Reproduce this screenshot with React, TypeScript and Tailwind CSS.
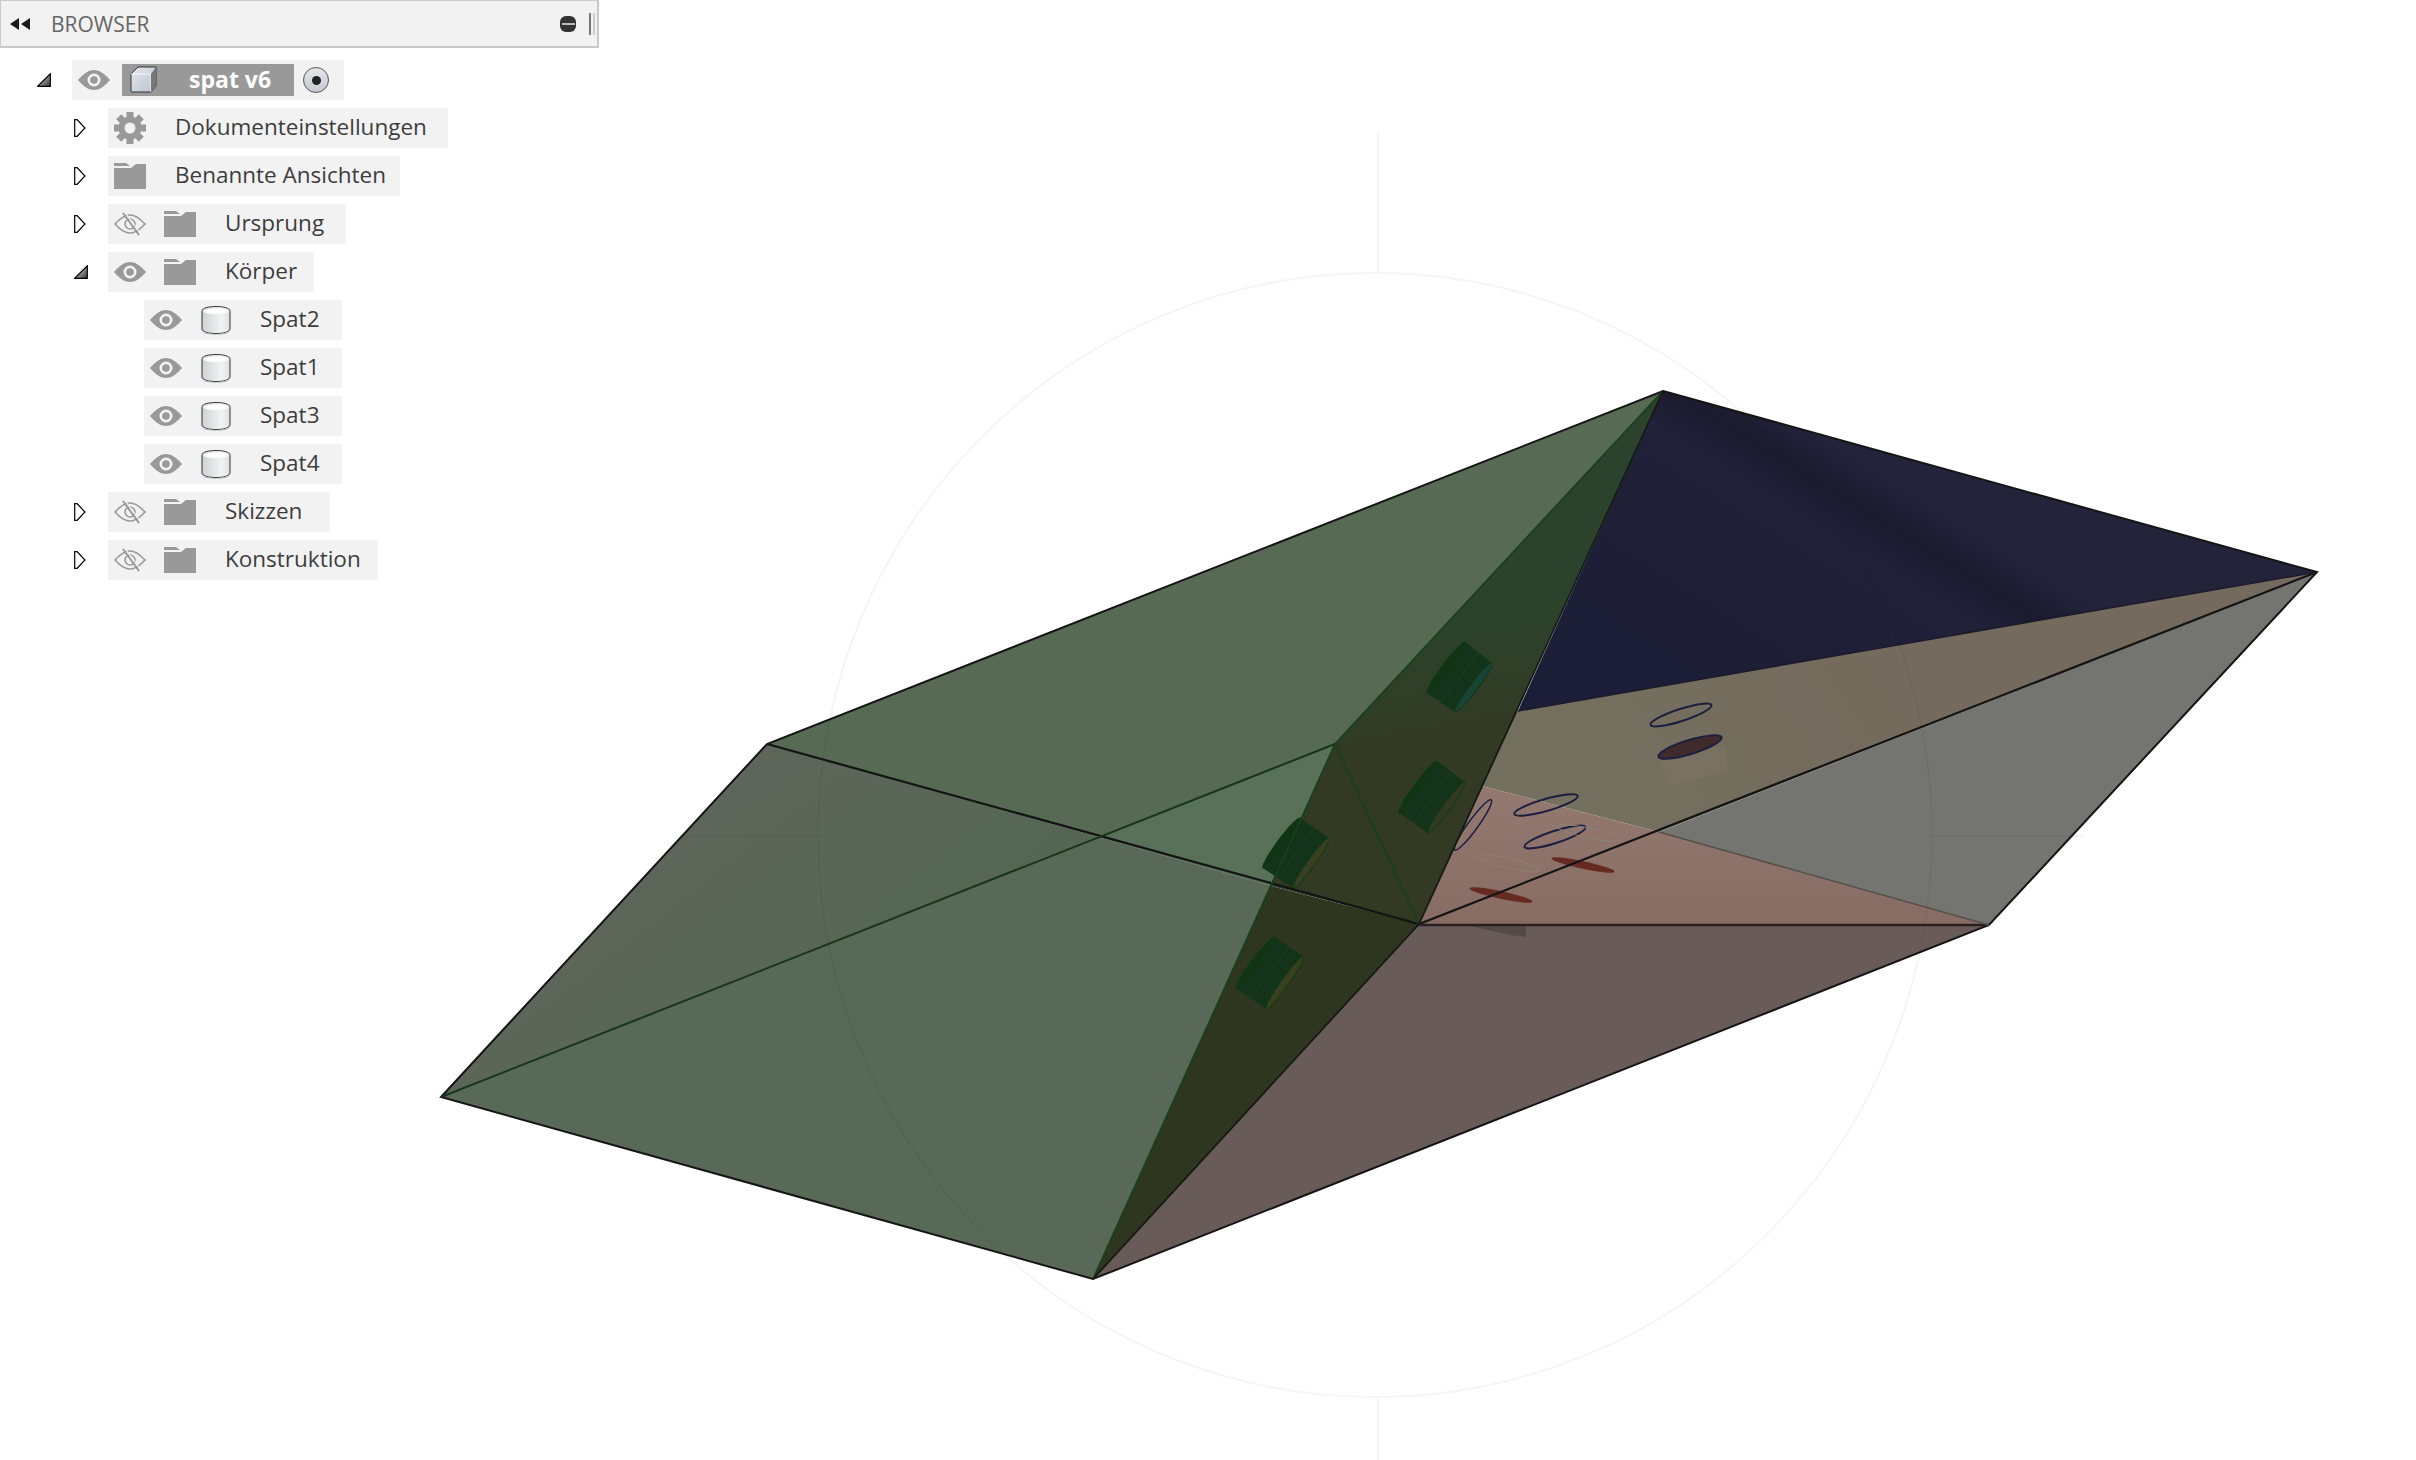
import React from 'react'

const font = "font-['Open_Sans','Liberation_Sans',sans-serif]"

function Eye() {
  return (
    <svg width="32" height="20" viewBox="0 0 32 20" className="shrink-0">
      <path d="M0 10C6 3 11 0 16 0C21 0 26 3 32 10C26 17 21 20 16 20C11 20 6 17 0 10Z" fill="#999" />
      <circle cx="16" cy="10" r="6.500" fill="#f2f2f2" />
      <circle cx="16" cy="10" r="3.800" fill="#999" />
    </svg>
  )
}

function EyeOff() {
  return (
    <svg width="32" height="24" viewBox="0 0 32 24" className="shrink-0">
      <path d="M1 12C6.500 6 11 3 16 3C21 3 25.500 6 31 12C25.500 18 21 21 16 21C11 21 6.500 18 1 12Z" fill="none" stroke="#999" strokeWidth="1.600" />
      <circle cx="16" cy="12" r="5" fill="none" stroke="#999" strokeWidth="1.600" />
      <path d="M9 1L25 23" stroke="#999" strokeWidth="2" />
      <path d="M11.500 1L27 22" stroke="#f2f2f2" strokeWidth="1.200" />
    </svg>
  )
}

function Folder() {
  return (
    <svg width="32" height="26" viewBox="0 0 32 26" className="shrink-0">
      <path d="M0 0H12L16 3H0Z" fill="#999" />
      <path d="M0 5H17L22 1H32V26H0Z" fill="#999" />
    </svg>
  )
}

function Gear() {
  return (
    <svg width="32" height="32" viewBox="0 0 32 32" className="shrink-0">
      {[0, 45, 90, 135].map((a) => (
        <rect key={a} x="12.500" y="0" width="7" height="32" fill="#999" transform={`rotate(${a} 16 16)`} />
      ))}
      <circle cx="16" cy="16" r="11.500" fill="#999" />
      <circle cx="16" cy="16" r="5.500" fill="#f2f2f2" />
    </svg>
  )
}

function Cube() {
  return (
    <svg width="27" height="28" viewBox="0 0 27 28" className="shrink-0">
      <defs>
        <linearGradient id="cubeFront" x1="0" y1="0" x2="1" y2="1">
          <stop offset="0" stopColor="#e6e9ee" />
          <stop offset="1" stopColor="#b9c1cd" />
        </linearGradient>
      </defs>
      <path d="M1 8L8 1H26V20L21 26H2Q1 26 1 25Z" fill="url(#cubeFront)" stroke="#333" strokeWidth="1" />
      <path d="M1 8H21V26" fill="none" stroke="#fff" strokeWidth="0.800" />
      <path d="M21 8L26 1V20L21 26Z" fill="#777" />
    </svg>
  )
}

function Body() {
  return (
    <svg width="30" height="30" viewBox="0 0 30 30" className="shrink-0">
      <defs>
        <linearGradient id="bodyFill" x1="0" y1="0" x2="1" y2="0">
          <stop offset="0" stopColor="#cfd1d6" />
          <stop offset="0.7" stopColor="#f4f4f5" />
          <stop offset="1" stopColor="#dddee0" />
        </linearGradient>
      </defs>
      <path d="M1 6C1 3 8 1.500 15 1.500C22 1.500 29 3 29 6V24C29 27 22 28.500 15 28.500C8 28.500 1 27 1 24Z" fill="url(#bodyFill)" stroke="#333" strokeWidth="1" />
      <path d="M1.500 6C4 10 26 10 28.500 6C26 2.500 4 2.500 1.500 6Z" fill="#fff" />
      <path d="M3 27.500C8 30 22 30 27 27.500" fill="none" stroke="#bbb" strokeWidth="1" />
    </svg>
  )
}

function Closed() {
  return (
    <svg width="12" height="18" viewBox="0 0 12 18">
      <path d="M0.700 0.700H3L11 9L3 17.300H0.700Z" fill="#fff" stroke="#000" strokeWidth="1.200" />
    </svg>
  )
}

function Open() {
  return (
    <svg width="14" height="14" viewBox="0 0 14 14">
      <defs>
        <linearGradient id="openFill" x1="0" y1="0" x2="1" y2="1">
          <stop offset="0" stopColor="#eee" />
          <stop offset="1" stopColor="#333" />
        </linearGradient>
      </defs>
      <path d="M0.700 13.300L13.300 0.800V13.300Z" fill="url(#openFill)" stroke="#000" strokeWidth="1.200" />
    </svg>
  )
}

function Row({ open, icons, label, width }: { open?: boolean; icons: React.ReactNode; label: string; width: string }) {
  return (
    <div className="flex items-center h-10">
      <div className="w-[34px] flex items-center">{open ? <Open /> : <Closed />}</div>
      <div className={`flex items-center h-10 bg-[#f2f2f2] pl-[6px] ${width}`}>
        {icons}
        <span className={`ml-[29px] pb-[1px] text-[#3d3d3d] text-[22.500px] leading-none ${font}`}>{label}</span>
      </div>
    </div>
  )
}

function BodyRow({ label }: { label: string }) {
  return (
    <div className="flex items-center h-10 w-[198px] bg-[#f2f2f2] pl-[6px]">
      <Eye />
      <span className="ml-[19px] flex"><Body /></span>
      <span className={`ml-[29px] pb-[1px] text-[#3d3d3d] text-[22.500px] leading-none ${font}`}>{label}</span>
    </div>
  )
}

function Hole({ cx, cy, rx, ry, angle, fill = 'none', stroke = '#1c2040', width = 2 }: { cx: number; cy: number; rx: number; ry: number; angle: number; fill?: string; stroke?: string; width?: number }) {
  return <ellipse cx={cx} cy={cy} rx={rx} ry={ry} fill={fill} stroke={stroke} strokeWidth={width} transform={`rotate(${angle} ${cx} ${cy})`} />
}

type P = [number, number]

function Cylinder({ a, b, c, d, endFill }: { a: P; b: P; c: P; d: P; endFill: string }) {
  const end = (p: P, q: P, fill: string) => {
    const cx = (p[0] + q[0]) / 2
    const cy = (p[1] + q[1]) / 2
    const rx = Math.hypot(q[0] - p[0], q[1] - p[1]) / 2
    const angle = (Math.atan2(q[1] - p[1], q[0] - p[0]) * 180) / Math.PI
    return <ellipse cx={cx} cy={cy} rx={rx} ry={4} fill={fill} stroke="#0f3a15" strokeWidth="1" transform={`rotate(${angle} ${cx} ${cy})`} />
  }
  const m1: P = [(a[0] + d[0]) / 2, (a[1] + d[1]) / 2]
  const m2: P = [(b[0] + c[0]) / 2, (b[1] + c[1]) / 2]
  return (
    <g>
      <polygon points={[a, b, c, d].map((p) => p.join(',')).join(' ')} fill="#13331a" />
      <path d={`M${m1[0]} ${m1[1]}L${m2[0]} ${m2[1]}`} stroke="#1c4020" strokeWidth="1" />
      {end(d, c, endFill)}
      {end(a, b, '#103414')}
    </g>
  )
}

function Model() {
  return (
    <svg width="2416" height="1460" viewBox="0 0 2416 1460" className="absolute inset-0" fill="none">
      <defs>
        <linearGradient id="blueFace" gradientUnits="userSpaceOnUse" x1="1620" y1="680" x2="1800" y2="390">
          <stop offset="0" stopColor="#1c1e37" />
          <stop offset="0.5" stopColor="#1f2036" />
          <stop offset="0.68" stopColor="#21223a" />
          <stop offset="0.8" stopColor="#1b1a2e" />
          <stop offset="0.92" stopColor="#23243b" />
          <stop offset="1" stopColor="#23233a" />
        </linearGradient>
        <linearGradient id="stripTop" gradientUnits="userSpaceOnUse" x1="1420" y1="620" x2="1445" y2="745">
          <stop offset="0" stopColor="#2b432c" />
          <stop offset="1" stopColor="#333a24" />
        </linearGradient>
        <linearGradient id="leftFace" gradientUnits="userSpaceOnUse" x1="700" y1="780" x2="880" y2="1010">
          <stop offset="0" stopColor="#5f665b" />
          <stop offset="1" stopColor="#546753" />
        </linearGradient>
        <linearGradient id="beige" gradientUnits="userSpaceOnUse" x1="1900" y1="640" x2="1600" y2="840">
          <stop offset="0" stopColor="#746a5d" />
          <stop offset="1" stopColor="#74705f" />
        </linearGradient>
        <linearGradient id="pink" gradientUnits="userSpaceOnUse" x1="1560" y1="800" x2="1560" y2="925">
          <stop offset="0" stopColor="#93786f" />
          <stop offset="1" stopColor="#876c63" />
        </linearGradient>
      </defs>

      {/* faces */}
      <polygon points="1663,391 2317,572 1518,711" fill="url(#blueFace)" />
      <polygon points="1500,711 1518,711 2317,572 1659,832 1470,783" fill="url(#beige)" />
      <polygon points="2317,572 1989,925 1659,832" fill="#747570" />
      <polygon points="1470,783 1659,832 1989,925 1419,925" fill="url(#pink)" />
      <polygon points="1419,924 1989,925 1093,1279" fill="#695b58" />
      <polygon points="1663,391 767,744 1099,837 1271,886 1335,744" fill="#566a54" />
      <polygon points="767,744 441,1097 1099,837" fill="url(#leftFace)" />
      <polygon points="441,1097 1093,1279 1271,886 1099,837" fill="#586957" />
      <polygon points="1099,837 1335,744 1271,886" fill="#597059" />
      <polygon points="1663,391 1419,924 1271,886 1335,744" fill="#333a24" />
      <polygon points="1663,391 1516,711 1335,744" fill="url(#stripTop)" />
      <polygon points="1271,886 1419,924 1093,1279" fill="#2e3620" />

      {/* bodies inside */}
      <Cylinder a={[1427, 693]} b={[1465, 642]} c={[1492, 663]} d={[1455, 712]} endFill="#1a4436" />
      <Cylinder a={[1399, 813]} b={[1437, 761]} c={[1465, 782]} d={[1428, 833]} endFill="#333a24" />
      <Cylinder a={[1263, 868]} b={[1300, 818]} c={[1329, 838]} d={[1293, 888]} endFill="#38401f" />
      <Cylinder a={[1236, 988]} b={[1275, 937]} c={[1303, 957]} d={[1266, 1009]} endFill="#38401f" />

      <polygon points="1660,762 1725,745 1728,770 1670,787" fill="#7d7464" opacity="0.5" />
      <Hole cx={1681} cy={715} rx={32} ry={6} angle={-18} />
      <Hole cx={1690} cy={747} rx={33} ry={7} angle={-17} fill="#3f2b2c" />
      <Hole cx={1546} cy={805} rx={33} ry={6} angle={-16} />
      <Hole cx={1555} cy={837} rx={32} ry={6} angle={-18} />
      <Hole cx={1473} cy={825} rx={31} ry={5} angle={-54} width={1.500} />
      <Hole cx={1508} cy={863} rx={32} ry={5} angle={13} stroke="#8a8278" width={1} />
      <Hole cx={1589} cy={833} rx={33} ry={5} angle={12} stroke="#8a8278" width={1} />
      <Hole cx={1583} cy={865} rx={32} ry={3.500} angle={12} fill="#662a22" stroke="#662a22" width={0.500} />
      <Hole cx={1501} cy={895} rx={32} ry={3.500} angle={12} fill="#662a22" stroke="#662a22" width={0.500} />
      <polygon points="1470,926 1526,926 1526,937 1510,935" fill="#564a47" />

      {/* edges */}
      <path d="M1663 391L2317 572L1989 925L1093 1279L441 1097L767 744Z" stroke="#151515" strokeWidth="2" />
      <path d="M767 744L1419 924L2317 572" stroke="#141414" strokeWidth="2.200" />
      <path d="M1419 925H1989" stroke="#2b1f1f" strokeWidth="2.500" />
      <path d="M441 1097L1335 744" stroke="#17351a" strokeWidth="2" />
      <path d="M1663 391L1335 744L1093 1279" stroke="#17401c" strokeWidth="1.800" />
      <path d="M1335 744L1419 924" stroke="#17401c" strokeWidth="1.800" />
      <path d="M1663 391L1419 924L1093 1279" stroke="#151a15" strokeWidth="1.800" />
      <path d="M1518 711L2317 572" stroke="#1a1a2a" strokeWidth="1.500" />
      <path d="M1659 832L1989 925" stroke="#55504a" strokeWidth="1.500" />

      {/* ring and axes, very faint */}
      <ellipse cx="1375" cy="835" rx="557" ry="562" stroke="#000" strokeOpacity="0.04" strokeWidth="2" />
      <path d="M1378 132V273M1378 1398V1460M1932 836H2083M680 836H822" stroke="#000" strokeOpacity="0.04" strokeWidth="2" />
    </svg>
  )
}

export default function App() {
  return (
    <div className="relative w-[2416px] h-[1460px] overflow-hidden bg-white">
      <Model />

      <div className="relative w-[600px]">
        {/* Browser header */}
        <div className="flex items-center justify-between w-[599px] h-12 bg-[#f2f2f2] border-b-2 border-r-2 border-t border-l border-[#c9c9c9] pl-[9px] pr-[2px]">
          <div className="flex items-center">
            <svg width="20" height="12" viewBox="0 0 20 12">
              <path d="M9 0V12L0 6ZM20 0V12L11 6Z" fill="#1a1a1a" />
            </svg>
            <span className={`ml-[21px] pt-[2px] text-[#666] text-[21px] leading-none ${font}`}>BROWSER</span>
          </div>
          <div className="flex items-center gap-[13px]">
            <div className="flex items-center justify-center w-4 h-4 rounded-[6px] bg-[#333]">
              <div className="w-[13px] h-[2px] bg-[#bbb]" />
            </div>
            <div className="flex h-[22px] gap-[2px]">
              <div className="w-[2px] bg-[#777]" />
              <div className="w-[2px] bg-[#ccc]" />
            </div>
          </div>
        </div>

        {/* Tree */}
        <div className="flex flex-col gap-2 pt-3">
          <div className="flex items-center h-10">
            <div className="w-[72px] pl-[37px] flex items-center"><Open /></div>
            <div className="flex items-center w-[272px] h-10 bg-[#f2f2f2] pl-[6px]">
              <Eye />
              <div className="ml-3 flex items-center w-[172px] h-8 bg-[#999] pl-2">
                <Cube />
                <span className={`ml-8 pb-[2px] text-white font-bold text-[23px] leading-none ${font}`}>spat v6</span>
              </div>
              <div className="ml-[9px] flex items-center justify-center w-[26px] h-[26px] rounded-full border border-[#555] bg-gradient-to-b from-[#e4e6ea] to-[#c6c9d0]">
                <div className="w-[9px] h-[9px] rounded-full bg-[#222]" />
              </div>
            </div>
          </div>

          <div className="pl-[74px] flex flex-col gap-2">
            <Row icons={<Gear />} label="Dokumenteinstellungen" width="w-[340px]" />
            <Row icons={<Folder />} label="Benannte Ansichten" width="w-[292px]" />
            <Row icons={<><EyeOff /><span className="ml-[18px] flex"><Folder /></span></>} label="Ursprung" width="w-[238px]" />
            <Row open icons={<><Eye /><span className="ml-[18px] flex"><Folder /></span></>} label="Körper" width="w-[206px]" />
            <div className="pl-[70px] flex flex-col gap-2">
              <BodyRow label="Spat2" />
              <BodyRow label="Spat1" />
              <BodyRow label="Spat3" />
              <BodyRow label="Spat4" />
            </div>
            <Row icons={<><EyeOff /><span className="ml-[18px] flex"><Folder /></span></>} label="Skizzen" width="w-[222px]" />
            <Row icons={<><EyeOff /><span className="ml-[18px] flex"><Folder /></span></>} label="Konstruktion" width="w-[270px]" />
          </div>
        </div>
      </div>
    </div>
  )
}
